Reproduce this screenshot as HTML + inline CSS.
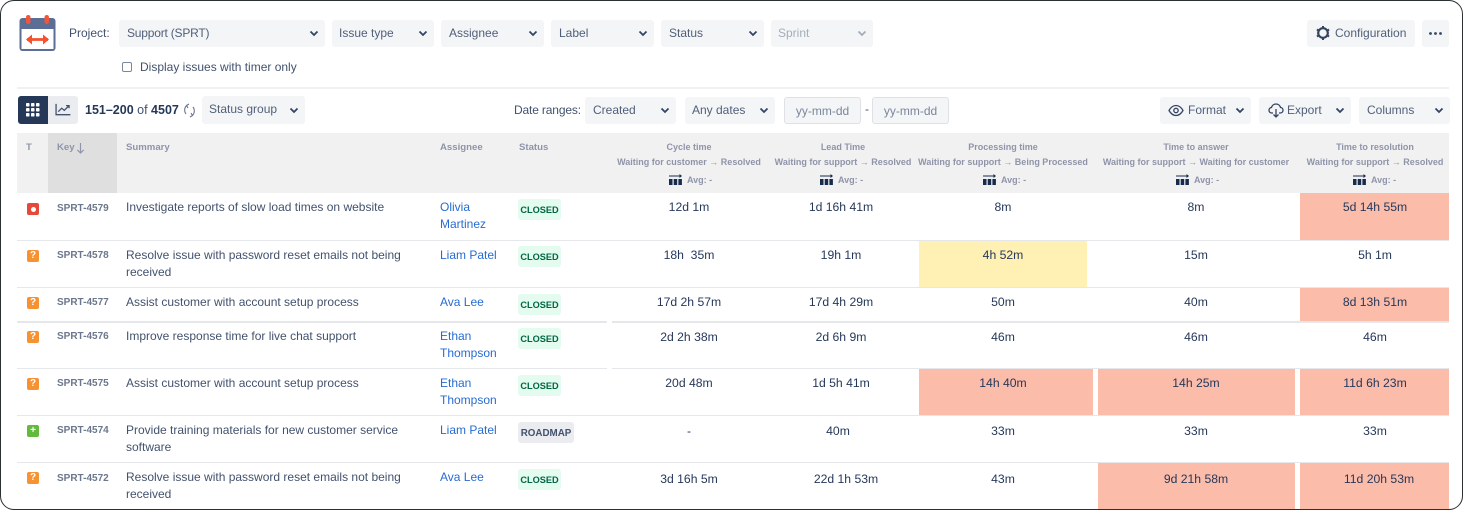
<!DOCTYPE html>
<html><head><meta charset="utf-8"><style>
*{box-sizing:border-box}
html,body{margin:0;padding:0;background:#fff}
body{width:1463px;height:510px;position:relative;overflow:hidden;font-family:"Liberation Sans",sans-serif;color:#172b4d}
#f{position:absolute;left:0;top:0;width:1463px;height:510px;border:1.5px solid #2b3033;border-radius:14px;z-index:50;pointer-events:none}
.a{position:absolute;white-space:nowrap}
.b{position:absolute;background:#f4f5f7;border-radius:3px;height:27px;color:#505f79;font-size:12px;line-height:26px;padding-left:7px;white-space:nowrap}
.b svg.c{position:absolute;right:6px;top:10px}
.s{font-size:12px;line-height:17px;color:#42526e;left:126px}
.u{font-size:12px;line-height:17px;color:#0052cc;left:440px;opacity:.85}
.k{font-size:10px;font-weight:bold;line-height:16px;color:#6b778c;left:57px;margin-top:1px}
.t{font-size:12.2px;line-height:16px;color:#26385a;text-align:center;width:200px}
.l{position:absolute;height:1px;background:#e6e7ea}
.z{position:absolute;left:518px;height:21px;border-radius:3px;background:#e3fcef;color:#006644;font-size:9.2px;font-weight:bold;line-height:23px;text-align:center;width:43px}
.h{font-size:9px;font-weight:bold;color:#8f94a8;line-height:14px;text-align:center;width:220px}
.h2{font-size:9.6px;font-weight:bold;color:#8f94a8;line-height:14px}
.i{position:absolute;left:27px;width:12px;height:12px;border-radius:2px;color:#fff;font-size:10px;font-weight:bold;line-height:12px;text-align:center}
.q{background:#f79232}.p{background:#fbbcaa}.y{background:#fff0b3}
</style></head><body>
<div id="f"></div>

<svg class="a" style="left:18px;top:14px" width="40" height="40" viewBox="0 0 40 40">
<rect x="1.500" y="4" width="36" height="33" rx="3" fill="#5a6e96"/>
<rect x="3.500" y="15" width="32" height="20" fill="#fff"/>
<rect x="8" y="1" width="4.500" height="9" rx="2.200" fill="#f2553a"/>
<rect x="26.500" y="1" width="4.500" height="9" rx="2.200" fill="#f2553a"/>
<path d="M9 25.500h21" stroke="#f4512c" stroke-width="2.800"/>
<path d="M14 20.500l-6 5 6 5zM25 20.500l6 5-6 5z" fill="#f4512c"/>
</svg>

<div class="a" style="left:69px;top:25px;font-size:12px;line-height:16px;color:#42526e">Project:</div>
<div class="b" style="left:119px;top:20px;width:206px;padding-left:8px;letter-spacing:-.2px">Support (SPRT)<svg class="c" width="10" height="7" viewBox="0 0 10 7"><path d="M1.500 1.500L5 5l3.500-3.500" fill="none" stroke="#344563" stroke-width="1.800"/></svg></div>
<div class="b" style="left:332px;top:20px;width:102px">Issue type<svg class="c" width="10" height="7" viewBox="0 0 10 7"><path d="M1.500 1.500L5 5l3.500-3.500" fill="none" stroke="#344563" stroke-width="1.800"/></svg></div>
<div class="b" style="left:441px;top:20px;width:103px;padding-left:8px">Assignee<svg class="c" width="10" height="7" viewBox="0 0 10 7"><path d="M1.500 1.500L5 5l3.500-3.500" fill="none" stroke="#344563" stroke-width="1.800"/></svg></div>
<div class="b" style="left:551px;top:20px;width:103px;padding-left:8px">Label<svg class="c" width="10" height="7" viewBox="0 0 10 7"><path d="M1.500 1.500L5 5l3.500-3.500" fill="none" stroke="#344563" stroke-width="1.800"/></svg></div>
<div class="b" style="left:661px;top:20px;width:103px;padding-left:8px">Status<svg class="c" width="10" height="7" viewBox="0 0 10 7"><path d="M1.500 1.500L5 5l3.500-3.500" fill="none" stroke="#344563" stroke-width="1.800"/></svg></div>
<div class="b" style="left:771px;top:20px;width:102px;color:#a5adba">Sprint<svg class="c" width="10" height="7" viewBox="0 0 10 7"><path d="M1.500 1.500L5 5l3.500-3.500" fill="none" stroke="#a5adba" stroke-width="1.800"/></svg></div>

<div class="b" style="left:1307px;top:20px;width:108px;padding-left:28px">Configuration<svg class="a" style="left:8px;top:5px" width="16" height="16" viewBox="0 0 16 16"><circle cx="8" cy="8" r="4.800" fill="none" stroke="#344563" stroke-width="2.200"/><path d="M8 1v2.500M8 12.500V15M1.900 4.500l2.200 1.300M11.900 10.200l2.200 1.300M1.900 11.500l2.200-1.300M11.900 5.800l2.200-1.300" stroke="#344563" stroke-width="2"/></svg></div>
<div class="b" style="left:1422px;top:20px;width:27px;padding:0"><svg class="a" style="left:7px;top:12px" width="13" height="3" viewBox="0 0 13 3"><circle cx="1.500" cy="1.500" r="1.400" fill="#344563"/><circle cx="6.500" cy="1.500" r="1.400" fill="#344563"/><circle cx="11.500" cy="1.500" r="1.400" fill="#344563"/></svg></div>

<div class="a" style="left:122px;top:62px;width:10px;height:10px;border:1px solid #7a8699;border-radius:2px;background:#fff"></div>
<div class="a" style="left:140px;top:59px;font-size:12px;line-height:16px;color:#42526e">Display issues with timer only</div>
<div class="l" style="left:17px;top:87px;width:1432px;height:2px;background:#f0f1f2"></div>

<div class="a" style="left:18px;top:96px;width:30px;height:28px;background:#253858;border-radius:3px 0 0 3px"></div>
<svg class="a" style="left:26px;top:103px" width="14" height="14" viewBox="0 0 14 14" fill="#fff"><rect x="0" y="0" width="3.500" height="3.500" rx=".8"/><rect x="5" y="0" width="3.500" height="3.500" rx=".8"/><rect x="10" y="0" width="3.500" height="3.500" rx=".8"/><rect x="0" y="5" width="3.500" height="3.500" rx=".8"/><rect x="5" y="5" width="3.500" height="3.500" rx=".8"/><rect x="10" y="5" width="3.500" height="3.500" rx=".8"/><rect x="0" y="10" width="3.500" height="3.500" rx=".8"/><rect x="5" y="10" width="3.500" height="3.500" rx=".8"/><rect x="10" y="10" width="3.500" height="3.500" rx=".8"/></svg>
<div class="a" style="left:48px;top:96px;width:30px;height:28px;background:#ebecf0;border-radius:0 3px 3px 0"></div>
<svg class="a" style="left:54px;top:103px" width="18" height="13" viewBox="0 0 18 15" fill="none" stroke="#42526e" stroke-width="1.500"><path d="M1 1v12.500h16.500"/><path d="M3.500 10l4-4 3 2.500 5-5M12.500 3h3.500v3"/></svg>

<div class="a" style="left:85px;top:102px;font-size:12.5px;line-height:16px;color:#42526e"><b style="color:#253858">151–200</b> of <b style="color:#253858">4507</b></div>
<svg class="a" style="left:183px;top:103px" width="13" height="15" viewBox="0 0 13 15" fill="none" stroke="#6b778c" stroke-width="1.100"><path d="M4 2.500C1.500 4 .8 8 3 11M9 12.500c2.500-1.500 3.200-5.500 1-8.500M6 1L3.500 2.500 5 5M7 14l2.500-1.500L8 10"/></svg>
<div class="b" style="left:202px;top:96px;width:103px;height:28px;line-height:27px">Status group<svg class="c" style="top:11px" width="10" height="7" viewBox="0 0 10 7"><path d="M1.500 1.500L5 5l3.500-3.500" fill="none" stroke="#344563" stroke-width="1.800"/></svg></div>

<div class="a" style="left:514px;top:102px;font-size:12px;line-height:16px;color:#42526e;letter-spacing:-.15px">Date ranges:</div>
<div class="b" style="left:585px;top:97px;width:91px;padding-left:8px">Created<svg class="c" width="10" height="7" viewBox="0 0 10 7"><path d="M1.500 1.500L5 5l3.500-3.500" fill="none" stroke="#344563" stroke-width="1.800"/></svg></div>
<div class="b" style="left:685px;top:97px;width:90px">Any dates<svg class="c" width="10" height="7" viewBox="0 0 10 7"><path d="M1.500 1.500L5 5l3.500-3.500" fill="none" stroke="#344563" stroke-width="1.800"/></svg></div>
<div class="b" style="left:784px;top:97px;width:77px;border:1px solid #dfe1e6;padding:0;text-align:center;line-height:26px;color:#7a869a">yy-mm-dd</div>
<div class="a" style="left:865px;top:101px;font-size:12px;line-height:16px;color:#42526e">-</div>
<div class="b" style="left:872px;top:97px;width:77px;border:1px solid #dfe1e6;padding:0;text-align:center;line-height:26px;color:#7a869a">yy-mm-dd</div>

<div class="b" style="left:1160px;top:97px;width:91px;padding-left:28px">Format<svg class="a" style="left:8px;top:7px" width="16" height="13" viewBox="0 0 16 13" fill="none" stroke="#344563" stroke-width="1.300"><path d="M1 6.500C3 3 5.500 1.500 8 1.500s5 1.500 7 5c-2 3.500-4.500 5-7 5s-5-1.500-7-5z"/><circle cx="8" cy="6.500" r="2.200"/></svg><svg class="c" width="10" height="7" viewBox="0 0 10 7"><path d="M1.500 1.500L5 5l3.500-3.500" fill="none" stroke="#344563" stroke-width="1.800"/></svg></div>
<div class="b" style="left:1259px;top:97px;width:92px;padding-left:28px">Export<svg class="a" style="left:9px;top:6px" width="16" height="15" viewBox="0 0 16 15" fill="none" stroke="#344563" stroke-width="1.300"><path d="M5 10H4C2 10 1 8.700 1 7.200S2.200 4.500 3.500 4.500C4 2.500 5.800 1 8 1s4 1.500 4.500 3.500C14 4.500 15 5.700 15 7.200S14 10 12 10h-1"/><path d="M8 6v8M5.500 11.500L8 14l2.500-2.500"/></svg><svg class="c" width="10" height="7" viewBox="0 0 10 7"><path d="M1.500 1.500L5 5l3.500-3.500" fill="none" stroke="#344563" stroke-width="1.800"/></svg></div>
<div class="b" style="left:1359px;top:97px;width:91px;padding-left:8px">Columns<svg class="c" width="10" height="7" viewBox="0 0 10 7"><path d="M1.500 1.500L5 5l3.500-3.500" fill="none" stroke="#344563" stroke-width="1.800"/></svg></div>

<!-- table header -->
<div class="a" style="left:17px;top:133px;width:1432px;height:60px;background:#f1f1f2"></div>
<div class="a" style="left:48px;top:133px;width:69px;height:60px;background:#dfdfdf"></div>
<div class="a h2" style="left:26px;top:141px">T</div>
<div class="a h2" style="left:57px;top:141px">Key</div>
<svg class="a" style="left:76px;top:143px" width="9" height="11" viewBox="0 0 9 12" fill="none" stroke="#8f94a8" stroke-width="1.300"><path d="M4.500 0v11M1 7.500L4.500 11 8 7.500"/></svg>
<div class="a h2" style="left:126px;top:141px">Summary</div>
<div class="a h2" style="left:440px;top:141px">Assignee</div>
<div class="a h2" style="left:519px;top:141px">Status</div>

<div class="a h" style="left:579px;top:140px">Cycle time<br><span style="display:block;margin-top:1px">Waiting for customer → Resolved</span></div>
<div class="a h" style="left:733px;top:140px">Lead Time<br><span style="display:block;margin-top:1px">Waiting for support → Resolved</span></div>
<div class="a h" style="left:893px;top:140px">Processing time<br><span style="display:block;margin-top:1px">Waiting for support → Being Processed</span></div>
<div class="a h" style="left:1086px;top:140px">Time to answer<br><span style="display:block;margin-top:1px">Waiting for support → Waiting for customer</span></div>
<div class="a h" style="left:1265px;top:140px">Time to resolution<br><span style="display:block;margin-top:1px">Waiting for support → Resolved</span></div>

<svg class="a" style="left:669px;top:174px" width="13" height="12" viewBox="0 0 13 12" fill="#172b4d"><path d="M0 1.500h10.500V0L13 2l-2.500 2V2.500H0z"/><rect x="0" y="5" width="3.500" height="6"/><rect x="4.700" y="5" width="3.500" height="6"/><rect x="9.400" y="5" width="3.500" height="6"/></svg>
<div class="a h" style="left:687px;top:173px;width:auto">Avg: -</div>
<svg class="a" style="left:820px;top:174px" width="13" height="12" viewBox="0 0 13 12" fill="#172b4d"><path d="M0 1.500h10.500V0L13 2l-2.500 2V2.500H0z"/><rect x="0" y="5" width="3.500" height="6"/><rect x="4.700" y="5" width="3.500" height="6"/><rect x="9.400" y="5" width="3.500" height="6"/></svg>
<div class="a h" style="left:838px;top:173px;width:auto">Avg: -</div>
<svg class="a" style="left:983px;top:174px" width="13" height="12" viewBox="0 0 13 12" fill="#172b4d"><path d="M0 1.500h10.500V0L13 2l-2.500 2V2.500H0z"/><rect x="0" y="5" width="3.500" height="6"/><rect x="4.700" y="5" width="3.500" height="6"/><rect x="9.400" y="5" width="3.500" height="6"/></svg>
<div class="a h" style="left:1001px;top:173px;width:auto">Avg: -</div>
<svg class="a" style="left:1176px;top:174px" width="13" height="12" viewBox="0 0 13 12" fill="#172b4d"><path d="M0 1.500h10.500V0L13 2l-2.500 2V2.500H0z"/><rect x="0" y="5" width="3.500" height="6"/><rect x="4.700" y="5" width="3.500" height="6"/><rect x="9.400" y="5" width="3.500" height="6"/></svg>
<div class="a h" style="left:1194px;top:173px;width:auto">Avg: -</div>
<svg class="a" style="left:1353px;top:174px" width="13" height="12" viewBox="0 0 13 12" fill="#172b4d"><path d="M0 1.500h10.500V0L13 2l-2.500 2V2.500H0z"/><rect x="0" y="5" width="3.500" height="6"/><rect x="4.700" y="5" width="3.500" height="6"/><rect x="9.400" y="5" width="3.500" height="6"/></svg>
<div class="a h" style="left:1371px;top:173px;width:auto">Avg: -</div>

<!-- row lines -->
<div class="l" style="left:17px;top:240px;width:1432px"></div>
<div class="l" style="left:17px;top:287px;width:1432px"></div>
<div class="l" style="left:17px;top:321px;width:590px;height:2px"></div>
<div class="l" style="left:612px;top:321px;width:837px;height:2px"></div>
<div class="l" style="left:17px;top:368px;width:590px"></div>
<div class="l" style="left:612px;top:368px;width:837px"></div>
<div class="l" style="left:17px;top:415px;width:1432px"></div>
<div class="l" style="left:17px;top:462px;width:1432px"></div>

<!-- coloured cells -->
<div class="a p" style="left:1300px;top:193px;width:149px;height:47px"></div>
<div class="a y" style="left:919px;top:241px;width:168px;height:46px"></div>
<div class="a p" style="left:1300px;top:288px;width:149px;height:33px"></div>
<div class="a p" style="left:919px;top:369px;width:174px;height:46px"></div>
<div class="a p" style="left:1098px;top:369px;width:197px;height:46px"></div>
<div class="a p" style="left:1300px;top:369px;width:149px;height:46px"></div>
<div class="a p" style="left:1098px;top:463px;width:197px;height:47px"></div>
<div class="a p" style="left:1300px;top:463px;width:149px;height:47px"></div>

<!-- row 1 -->
<div class="i" style="top:203px;background:#e5493a"><span class="a" style="left:3.500px;top:3.500px;width:5px;height:5px;border-radius:50%;background:#fff"></span></div>
<div class="a k" style="top:200px">SPRT-4579</div>
<div class="a s" style="top:199px">Investigate reports of slow load times on website</div>
<div class="a u" style="top:199px">Olivia<br>Martinez</div>
<div class="z" style="top:199px">CLOSED</div>
<div class="a t" style="left:589px;top:199px">12d 1m</div>
<div class="a t" style="left:741px;top:199px">1d 16h 41m</div>
<div class="a t" style="left:903px;top:199px">8m</div>
<div class="a t" style="left:1096px;top:199px">8m</div>
<div class="a t" style="left:1275px;top:199px">5d 14h 55m</div>

<!-- row 2 -->
<div class="i q" style="top:250px">?</div>
<div class="a k" style="top:247px">SPRT-4578</div>
<div class="a s" style="top:247px">Resolve issue with password reset emails not being<br>received</div>
<div class="a u" style="top:247px">Liam Patel</div>
<div class="z" style="top:246px">CLOSED</div>
<div class="a t" style="left:589px;top:247px">18h&nbsp; 35m</div>
<div class="a t" style="left:741px;top:247px">19h 1m</div>
<div class="a t" style="left:903px;top:247px">4h 52m</div>
<div class="a t" style="left:1096px;top:247px">15m</div>
<div class="a t" style="left:1275px;top:247px">5h 1m</div>

<!-- row 3 -->
<div class="i q" style="top:297px">?</div>
<div class="a k" style="top:294px">SPRT-4577</div>
<div class="a s" style="top:294px">Assist customer with account setup process</div>
<div class="a u" style="top:294px">Ava Lee</div>
<div class="z" style="top:294px">CLOSED</div>
<div class="a t" style="left:589px;top:294px">17d 2h 57m</div>
<div class="a t" style="left:741px;top:294px">17d 4h 29m</div>
<div class="a t" style="left:903px;top:294px">50m</div>
<div class="a t" style="left:1096px;top:294px">40m</div>
<div class="a t" style="left:1275px;top:294px">8d 13h 51m</div>

<!-- row 4 -->
<div class="i q" style="top:331px">?</div>
<div class="a k" style="top:328px">SPRT-4576</div>
<div class="a s" style="top:328px">Improve response time for live chat support</div>
<div class="a u" style="top:328px">Ethan<br>Thompson</div>
<div class="z" style="top:328px">CLOSED</div>
<div class="a t" style="left:589px;top:329px">2d 2h 38m</div>
<div class="a t" style="left:741px;top:329px">2d 6h 9m</div>
<div class="a t" style="left:903px;top:329px">46m</div>
<div class="a t" style="left:1096px;top:329px">46m</div>
<div class="a t" style="left:1275px;top:329px">46m</div>

<!-- row 5 -->
<div class="i q" style="top:378px">?</div>
<div class="a k" style="top:375px">SPRT-4575</div>
<div class="a s" style="top:375px">Assist customer with account setup process</div>
<div class="a u" style="top:375px">Ethan<br>Thompson</div>
<div class="z" style="top:375px">CLOSED</div>
<div class="a t" style="left:589px;top:375px">20d 48m</div>
<div class="a t" style="left:741px;top:375px">1d 5h 41m</div>
<div class="a t" style="left:903px;top:375px">14h 40m</div>
<div class="a t" style="left:1096px;top:375px">14h 25m</div>
<div class="a t" style="left:1275px;top:375px">11d 6h 23m</div>

<!-- row 6 -->
<div class="i" style="top:425px;background:#63ba3c">+</div>
<div class="a k" style="top:422px">SPRT-4574</div>
<div class="a s" style="top:422px">Provide training materials for new customer service<br>software</div>
<div class="a u" style="top:422px">Liam Patel</div>
<div class="z" style="top:422px;width:56px;background:#ebecf0;color:#42526e;font-size:9.800px">ROADMAP</div>
<div class="a t" style="left:589px;top:423px">-</div>
<div class="a t" style="left:738px;top:423px">40m</div>
<div class="a t" style="left:903px;top:423px">33m</div>
<div class="a t" style="left:1096px;top:423px">33m</div>
<div class="a t" style="left:1275px;top:423px">33m</div>

<!-- row 7 -->
<div class="i q" style="top:472px">?</div>
<div class="a k" style="top:470px">SPRT-4572</div>
<div class="a s" style="top:469px">Resolve issue with password reset emails not being<br>received</div>
<div class="a u" style="top:469px">Ava Lee</div>
<div class="z" style="top:469px">CLOSED</div>
<div class="a t" style="left:589px;top:471px">3d 16h 5m</div>
<div class="a t" style="left:746px;top:471px">22d 1h 53m</div>
<div class="a t" style="left:903px;top:471px">43m</div>
<div class="a t" style="left:1096px;top:471px">9d 21h 58m</div>
<div class="a t" style="left:1279px;top:471px">11d 20h 53m</div>
</body></html>
